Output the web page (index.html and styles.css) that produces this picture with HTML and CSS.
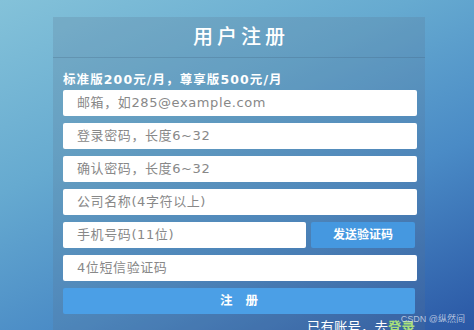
FILE: index.html
```html
<!DOCTYPE html>
<html lang="zh">
<head>
<meta charset="utf-8">
<title>用户注册</title>
<link rel="stylesheet" href="styles.css">
</head>
<body>
<div class="page">
  <div class="card">
    <div class="card-head">用户注册</div>
    <div class="card-body">
      <div class="price">标准版200元/月，尊享版500元/月</div>
      <div class="field">邮箱，如285@example.com</div>
      <div class="field">登录密码，长度6~32</div>
      <div class="field">确认密码，长度6~32</div>
      <div class="field">公司名称(4字符以上)</div>
      <div class="row">
        <div class="field grow">手机号码(11位)</div>
        <div class="btn-send">发送验证码</div>
      </div>
      <div class="field">4位短信验证码</div>
      <div class="btn-reg">注&nbsp;&nbsp;&nbsp;册</div>
      <div class="login">已有账号，去<span class="link">登录</span></div>
    </div>
  </div>
  <div class="mark">CSDN @纵然间</div>
</div>
</body>
</html>
```
FILE: styles.css
```css
html, body {
  margin: 0;
  padding: 0;
}
body {
  width: 474px;
  height: 330px;
  overflow: hidden;
  font-family: "DejaVu Sans", "Noto Sans CJK SC", sans-serif;
}
.page {
  position: relative;
  width: 474px;
  height: 330px;
  background: linear-gradient(155deg, #84c2d9 0%, #66aad0 35%, #4a8bc6 65%, #2a57a5 100%);
  padding-top: 17px;
  box-sizing: border-box;
  overflow: hidden;
}
.card {
  margin-left: 53px;
  width: 372px;
  height: 330px;
  background: rgba(92, 112, 140, 0.22);
}
.card-head {
  height: 40px;
  line-height: 40px;
  text-align: center;
  color: #ffffff;
  font-size: 20px;
  font-weight: 500;
  letter-spacing: 4px;
  padding-left: 4px;
  border-bottom: 1px solid rgba(60, 90, 120, 0.25);
}
.card-body {
  padding: 15px 8px 0 10px;
  display: flex;
  flex-direction: column;
  gap: 7px;
}
.price {
  color: #ffffff;
  font-size: 12.5px;
  font-weight: bold;
  line-height: 14px;
  letter-spacing: 1.1px;
  margin-bottom: -4px;
}
.field {
  height: 26px;
  line-height: 26px;
  background: #ffffff;
  border-radius: 2px;
  padding-left: 14px;
  color: #888888;
  font-size: 13px;
  letter-spacing: 0.6px;
  box-sizing: border-box;
}
.row {
  display: flex;
  gap: 5px;
}
.grow {
  flex: 1;
}
.btn-send {
  width: 104px;
  height: 26px;
  line-height: 26px;
  background: #4598e0;
  color: #ffffff;
  font-size: 12px;
  font-weight: bold;
  text-align: center;
  border-radius: 2px;
  margin-right: 2px;
}
.btn-reg {
  height: 26px;
  line-height: 26px;
  background: #4b9fe6;
  color: #ffffff;
  font-size: 12.5px;
  font-weight: bold;
  text-align: center;
  border-radius: 2px;
  margin-right: 2px;
}
.login {
  text-align: right;
  color: #ffffff;
  font-size: 13.5px;
  line-height: 16px;
  margin-top: -2px;
  padding-right: 2px;
}
.link {
  color: #a8e07a;
  font-weight: bold;
}
.mark {
  position: absolute;
  right: 9px;
  bottom: 5px;
  font-size: 9px;
  color: rgba(215, 222, 235, 0.8);
  font-family: "Liberation Sans", "Noto Sans CJK SC", sans-serif;
}
```
